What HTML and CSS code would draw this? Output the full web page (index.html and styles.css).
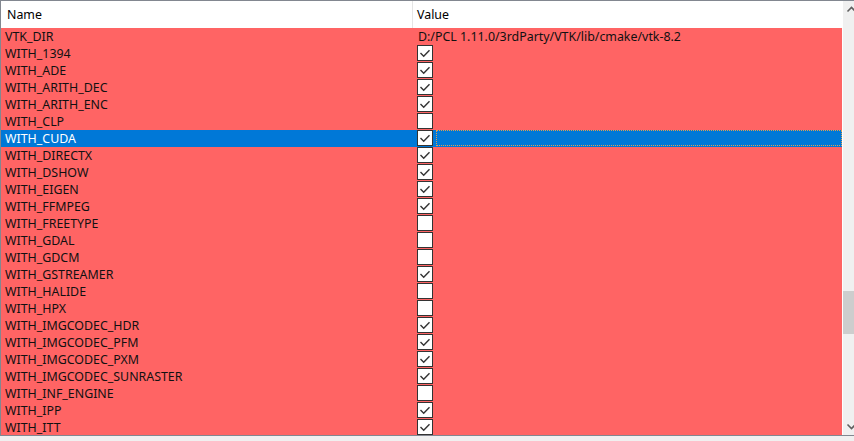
FILE: index.html
```html
<!DOCTYPE html>
<html>
<head>
<meta charset="utf-8">
<link rel="stylesheet" href="styles.css">
</head>
<body>
<div class="window">
  <div class="frame">
    <div class="view">
      <div class="header">
        <div class="hcell hname">Name</div>
        <div class="hcell hvalue">Value</div>
      </div>
      <div class="rows">
        <div class="row"><div class="name">VTK_DIR</div><div class="value"><span class="path">D:/PCL 1.11.0/3rdParty/VTK/lib/cmake/vtk-8.2</span></div></div>
        <div class="row"><div class="name">WITH_1394</div><div class="value"><span class="cb"><svg class="tick" viewBox="0 0 16 16"><path d="M3.5 8 L6.7 11.2 L12.5 5.2"/></svg></span></div></div>
        <div class="row"><div class="name">WITH_ADE</div><div class="value"><span class="cb"><svg class="tick" viewBox="0 0 16 16"><path d="M3.5 8 L6.7 11.2 L12.5 5.2"/></svg></span></div></div>
        <div class="row"><div class="name">WITH_ARITH_DEC</div><div class="value"><span class="cb"><svg class="tick" viewBox="0 0 16 16"><path d="M3.5 8 L6.7 11.2 L12.5 5.2"/></svg></span></div></div>
        <div class="row"><div class="name">WITH_ARITH_ENC</div><div class="value"><span class="cb"><svg class="tick" viewBox="0 0 16 16"><path d="M3.5 8 L6.7 11.2 L12.5 5.2"/></svg></span></div></div>
        <div class="row"><div class="name">WITH_CLP</div><div class="value"><span class="cb"></span></div></div>
        <div class="row selected"><div class="name">WITH_CUDA</div><div class="value"><span class="cb"><svg class="tick" viewBox="0 0 16 16"><path d="M3.5 8 L6.7 11.2 L12.5 5.2"/></svg></span><span class="focus"></span></div></div>
        <div class="row"><div class="name">WITH_DIRECTX</div><div class="value"><span class="cb"><svg class="tick" viewBox="0 0 16 16"><path d="M3.5 8 L6.7 11.2 L12.5 5.2"/></svg></span></div></div>
        <div class="row"><div class="name">WITH_DSHOW</div><div class="value"><span class="cb"><svg class="tick" viewBox="0 0 16 16"><path d="M3.5 8 L6.7 11.2 L12.5 5.2"/></svg></span></div></div>
        <div class="row"><div class="name">WITH_EIGEN</div><div class="value"><span class="cb"><svg class="tick" viewBox="0 0 16 16"><path d="M3.5 8 L6.7 11.2 L12.5 5.2"/></svg></span></div></div>
        <div class="row"><div class="name">WITH_FFMPEG</div><div class="value"><span class="cb"><svg class="tick" viewBox="0 0 16 16"><path d="M3.5 8 L6.7 11.2 L12.5 5.2"/></svg></span></div></div>
        <div class="row"><div class="name">WITH_FREETYPE</div><div class="value"><span class="cb"></span></div></div>
        <div class="row"><div class="name">WITH_GDAL</div><div class="value"><span class="cb"></span></div></div>
        <div class="row"><div class="name">WITH_GDCM</div><div class="value"><span class="cb"></span></div></div>
        <div class="row"><div class="name">WITH_GSTREAMER</div><div class="value"><span class="cb"><svg class="tick" viewBox="0 0 16 16"><path d="M3.5 8 L6.7 11.2 L12.5 5.2"/></svg></span></div></div>
        <div class="row"><div class="name">WITH_HALIDE</div><div class="value"><span class="cb"></span></div></div>
        <div class="row"><div class="name">WITH_HPX</div><div class="value"><span class="cb"></span></div></div>
        <div class="row"><div class="name">WITH_IMGCODEC_HDR</div><div class="value"><span class="cb"><svg class="tick" viewBox="0 0 16 16"><path d="M3.5 8 L6.7 11.2 L12.5 5.2"/></svg></span></div></div>
        <div class="row"><div class="name">WITH_IMGCODEC_PFM</div><div class="value"><span class="cb"><svg class="tick" viewBox="0 0 16 16"><path d="M3.5 8 L6.7 11.2 L12.5 5.2"/></svg></span></div></div>
        <div class="row"><div class="name">WITH_IMGCODEC_PXM</div><div class="value"><span class="cb"><svg class="tick" viewBox="0 0 16 16"><path d="M3.5 8 L6.7 11.2 L12.5 5.2"/></svg></span></div></div>
        <div class="row"><div class="name">WITH_IMGCODEC_SUNRASTER</div><div class="value"><span class="cb"><svg class="tick" viewBox="0 0 16 16"><path d="M3.5 8 L6.7 11.2 L12.5 5.2"/></svg></span></div></div>
        <div class="row"><div class="name">WITH_INF_ENGINE</div><div class="value"><span class="cb"></span></div></div>
        <div class="row"><div class="name">WITH_IPP</div><div class="value"><span class="cb"><svg class="tick" viewBox="0 0 16 16"><path d="M3.5 8 L6.7 11.2 L12.5 5.2"/></svg></span></div></div>
        <div class="row"><div class="name">WITH_ITT</div><div class="value"><span class="cb"><svg class="tick" viewBox="0 0 16 16"><path d="M3.5 8 L6.7 11.2 L12.5 5.2"/></svg></span></div></div>
      </div>
    </div>
    <div class="scrollbar">
      <div class="arrow">
        <svg width="17" height="17" viewBox="0 0 17 17"><path d="M4.5 10.5 L8.5 6.5 L12.5 10.5" fill="none" stroke="#606060" stroke-width="1.6"/></svg>
      </div>
      <div class="track"><div class="thumb"></div></div>
      <div class="arrow">
        <svg width="17" height="17" viewBox="0 0 17 17"><path d="M4.5 6.5 L8.5 10.5 L12.5 6.5" fill="none" stroke="#606060" stroke-width="1.6"/></svg>
      </div>
    </div>
  </div>
</div>
</body>
</html>
```

FILE: styles.css
```css
html, body {
  margin: 0;
  padding: 0;
  background: #f0f0f0;
  overflow: hidden;
}
.window {
  width: 854px;
  height: 441px;
  overflow: hidden;
  font-family: "Noto Sans", "Open Sans", sans-serif;
  font-size: 12.4px;
  color: #000;
}
.frame {
  display: flex;
  width: 860px;
  height: 434px;
  border-top: 1px solid #828790;
  border-left: 1px solid #828790;
  border-bottom: 1px solid #828790;
}
.view {
  width: 842px;
  flex: none;
  background: #fff;
  display: flex;
  flex-direction: column;
}
.header {
  height: 27px;
  display: flex;
  flex: none;
  background: #fff;
}
.hcell {
  line-height: 27px;
  height: 27px;
}
.hname {
  width: 412px;
  padding-left: 6px;
  box-sizing: border-box;
  border-right: 1px solid #e5e5e5;
}
.hvalue {
  padding-left: 4px;
}
.rows {
  height: 407px;
  overflow: hidden;
  margin-right: 1px;
}
.row {
  height: 17px;
  display: flex;
  background: #ff6464;
  line-height: 17px;
  color: #111;
}
.row .name {
  width: 412px;
  flex: none;
  padding-left: 4px;
  box-sizing: border-box;
  white-space: nowrap;
}
.row .value {
  flex: 1;
  display: flex;
  align-items: flex-start;
  padding-left: 4px;
}
.path {
  padding-left: 1px;
  white-space: nowrap;
}
.row.selected {
  background: #0078d7;
  color: #fff;
}
.cb {
  box-sizing: border-box;
  width: 16px;
  height: 16px;
  margin-top: 0;
  border: 1px solid #333;
  background: #fff;
  flex: none;
  display: block;
}
.tick {
  display: block;
  width: 16px;
  height: 16px;
  margin: -1px 0 0 -1px;
  fill: none;
  stroke: #333;
  stroke-width: 1.4;
}
.focus {
  flex: 1;
  height: 16px;
  margin-left: 3px;
  box-sizing: border-box;
  border: 1px dotted #e0a050;
}
.scrollbar {
  width: 17px;
  flex: none;
  background: #f0f0f0;
  display: flex;
  flex-direction: column;
}
.arrow {
  height: 17px;
  flex: none;
}
.arrow svg {
  display: block;
}
.track {
  flex: 1;
}
.thumb {
  margin-top: 273px;
  height: 43px;
  background: #cdcdcd;
}
```
